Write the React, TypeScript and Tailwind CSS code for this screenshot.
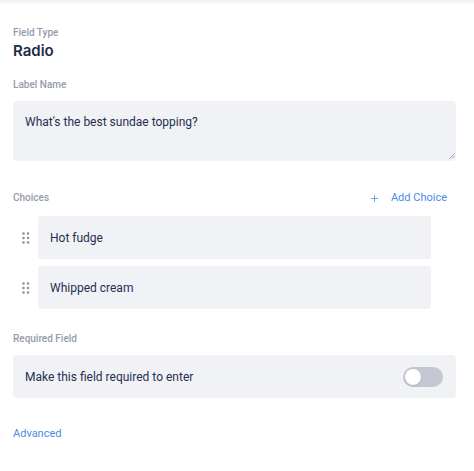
import { Plus } from "lucide-react"

function DragHandle() {
  return (
    <svg width="8" height="12" viewBox="0 0 8 12" className="shrink-0">
      {[1.5, 6].map((x) =>
        [1.5, 6, 10.5].map((y) => <circle key={`${x}-${y}`} cx={x} cy={y} r="1.3" fill="#8a93a3" />)
      )}
    </svg>
  )
}

function Label({ children }: { children: React.ReactNode }) {
  return (
    <div className="text-[10px] leading-[14px] font-medium text-[#959cab] font-['Roboto',sans-serif]">{children}</div>
  )
}

export default function App() {
  const choices = ["Hot fudge", "Whipped cream"]

  return (
    <div className="w-[474px] h-[471px] bg-white overflow-hidden font-['Roboto',sans-serif] relative">
      <div className="h-[5px] bg-gradient-to-b from-[#f0f0f0] to-white" />
      <div className="pl-[13px] pr-[18px]">
        <div className="mt-[21px]">
          <Label>Field Type</Label>
        </div>
        <div className="mt-[1px] text-[15px] leading-[20px] font-semibold text-[#1d2a48] font-['Inter',sans-serif]">
          Radio
        </div>

        <div className="mt-[17px]">
          <Label>Label Name</Label>
        </div>
        <div className="mt-[9px] h-[60px] rounded-[4px] bg-[#f1f2f6] relative px-[12px] pt-[13px]">
          <div className="text-[12px] leading-[17px] text-[#243050]">What's the best sundae topping?</div>
          <svg width="6" height="6" viewBox="0 0 6 6" className="absolute right-[1px] bottom-[2px]">
            <path d="M0.5 5.5 L5.5 0.5 M3 5.5 L5.5 3" stroke="#8a8f99" strokeWidth="0.8" />
          </svg>
        </div>

        <div className="mt-[30px] flex items-center justify-between">
          <Label>Choices</Label>
          <button className="flex items-center gap-[11px] mr-[9px] text-[11px] leading-[14px] text-[#4a8be6]">
            <Plus size={11} strokeWidth={1.6} />
            Add Choice
          </button>
        </div>

        <div className="mt-[11px] flex flex-col gap-[7px]">
          {choices.map((c) => (
            <div key={c} className="flex items-center">
              <div className="w-[25px] flex justify-center pl-[1px]">
                <DragHandle />
              </div>
              <div className="w-[393px] h-[43px] rounded-[3px] bg-[#f1f2f6] flex items-center px-[12px] text-[12px] text-[#243050]">
                {c}
              </div>
            </div>
          ))}
        </div>

        <div className="mt-[23px]">
          <Label>Required Field</Label>
        </div>
        <div className="mt-[9px] h-[43px] rounded-[4px] bg-[#f1f2f6] flex items-center justify-between pl-[12px] pr-[13px]">
          <span className="text-[12px] text-[#243050]">Make this field required to enter</span>
          <div className="w-[40px] h-[20px] rounded-full bg-[#c3c8d3] p-[2px] flex items-center">
            <div className="w-[16px] h-[16px] rounded-full bg-white shadow-sm" />
          </div>
        </div>

        <div className="mt-[29px] text-[11px] leading-[14px] text-[#4a8be6]">Advanced</div>
      </div>
    </div>
  )
}
